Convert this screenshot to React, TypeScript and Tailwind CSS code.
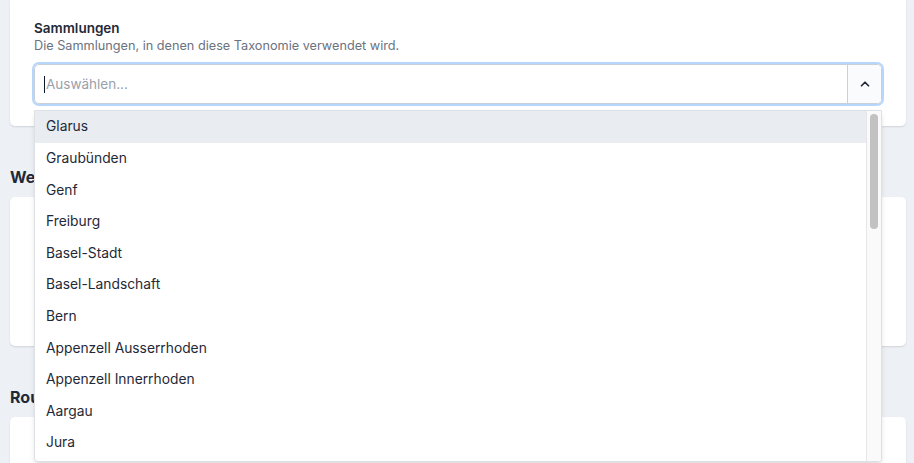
import { ChevronUp } from "lucide-react";

const cantons = [
    "Glarus",
    "Graubünden",
    "Genf",
    "Freiburg",
    "Basel-Stadt",
    "Basel-Landschaft",
    "Bern",
    "Appenzell Ausserrhoden",
    "Appenzell Innerrhoden",
    "Aargau",
    "Jura",
    "Luzern",
    "Neuenburg",
    "Nidwalden",
    "Obwalden",
    "St. Gallen",
    "Schaffhausen",
    "Solothurn",
    "Schwyz",
    "Thurgau",
    "Tessin",
    "Uri",
    "Waadt",
    "Wallis",
    "Zug",
    "Zürich",
];

const CollectionSelect = () => {
    return (
        <div className="relative">
            <div className="flex h-[40px] rounded-[5px] border border-[#c9d0d9] ring-2 ring-[#b6d6fb]">
                <div className="flex flex-1 items-center pl-[9px]">
                    <span className="mr-px h-[17px] w-px bg-[#111827]" />
                    <span className="text-[13.5px] text-[#9aa1ab]">Auswählen...</span>
                </div>
                <button className="flex w-[34px] items-center justify-center rounded-r-[4px] border-l border-[#c9d0d9] bg-[#fafbfc]">
                    <ChevronUp className="h-[14px] w-[14px] text-[#1f2937]" strokeWidth={3} />
                </button>
            </div>
            <div className="absolute left-0 right-0 top-[46px] z-10 flex h-[352px] overflow-hidden rounded-b-[4px] border border-[#dde1e6] bg-white shadow-md">
                <ul className="flex-1">
                    {cantons.map((name, i) => (
                        <li
                            key={name}
                            className={`flex h-[31.6px] items-center pl-[11px] text-[13.8px] text-[#1f2937] ${
                                i === 0 ? "bg-[#e9edf2]" : ""
                            }`}
                        >
                            {name}
                        </li>
                    ))}
                </ul>
                <div className="w-[15px] border-l border-[#e6e6e6] bg-[#fafafa] pl-[3px] pt-[3px]">
                    <div className="h-[115px] w-[8px] rounded-full bg-[#c2c2c2]" />
                </div>
            </div>
        </div>
    );
};

export default function App() {
    return (
        <div
            className="h-[463px] overflow-hidden bg-[#edf0f4] pl-[10px] pr-[8px]"
            style={{ fontFamily: "Inter, 'Noto Sans', sans-serif" }}
        >
            <div className="rounded-b-[5px] bg-white px-6 pb-[22px] pt-[18px] shadow-[0_1px_2px_rgba(0,0,0,0.12)]">
                <div className="text-[13.5px] font-semibold leading-5 text-[#1f2937]">Sammlungen</div>
                <div className="mb-[10px] text-[12.7px] leading-4 text-[#6b7280]">
                    Die Sammlungen, in denen diese Taxonomie verwendet wird.
                </div>
                <CollectionSelect />
            </div>

            <h2 className="mt-[39px] mb-2 text-base font-bold leading-6 text-[#1f2937]">
                Weitere Einstellungen
            </h2>
            <div className="h-[149px] rounded-[5px] bg-white shadow-[0_1px_2px_rgba(0,0,0,0.12)]" />

            <h2 className="mt-[39px] mb-2 text-base font-bold leading-6 text-[#1f2937]">
                Routing
            </h2>
            <div className="h-[149px] rounded-[5px] bg-white shadow-[0_1px_2px_rgba(0,0,0,0.12)]" />
        </div>
    );
}
